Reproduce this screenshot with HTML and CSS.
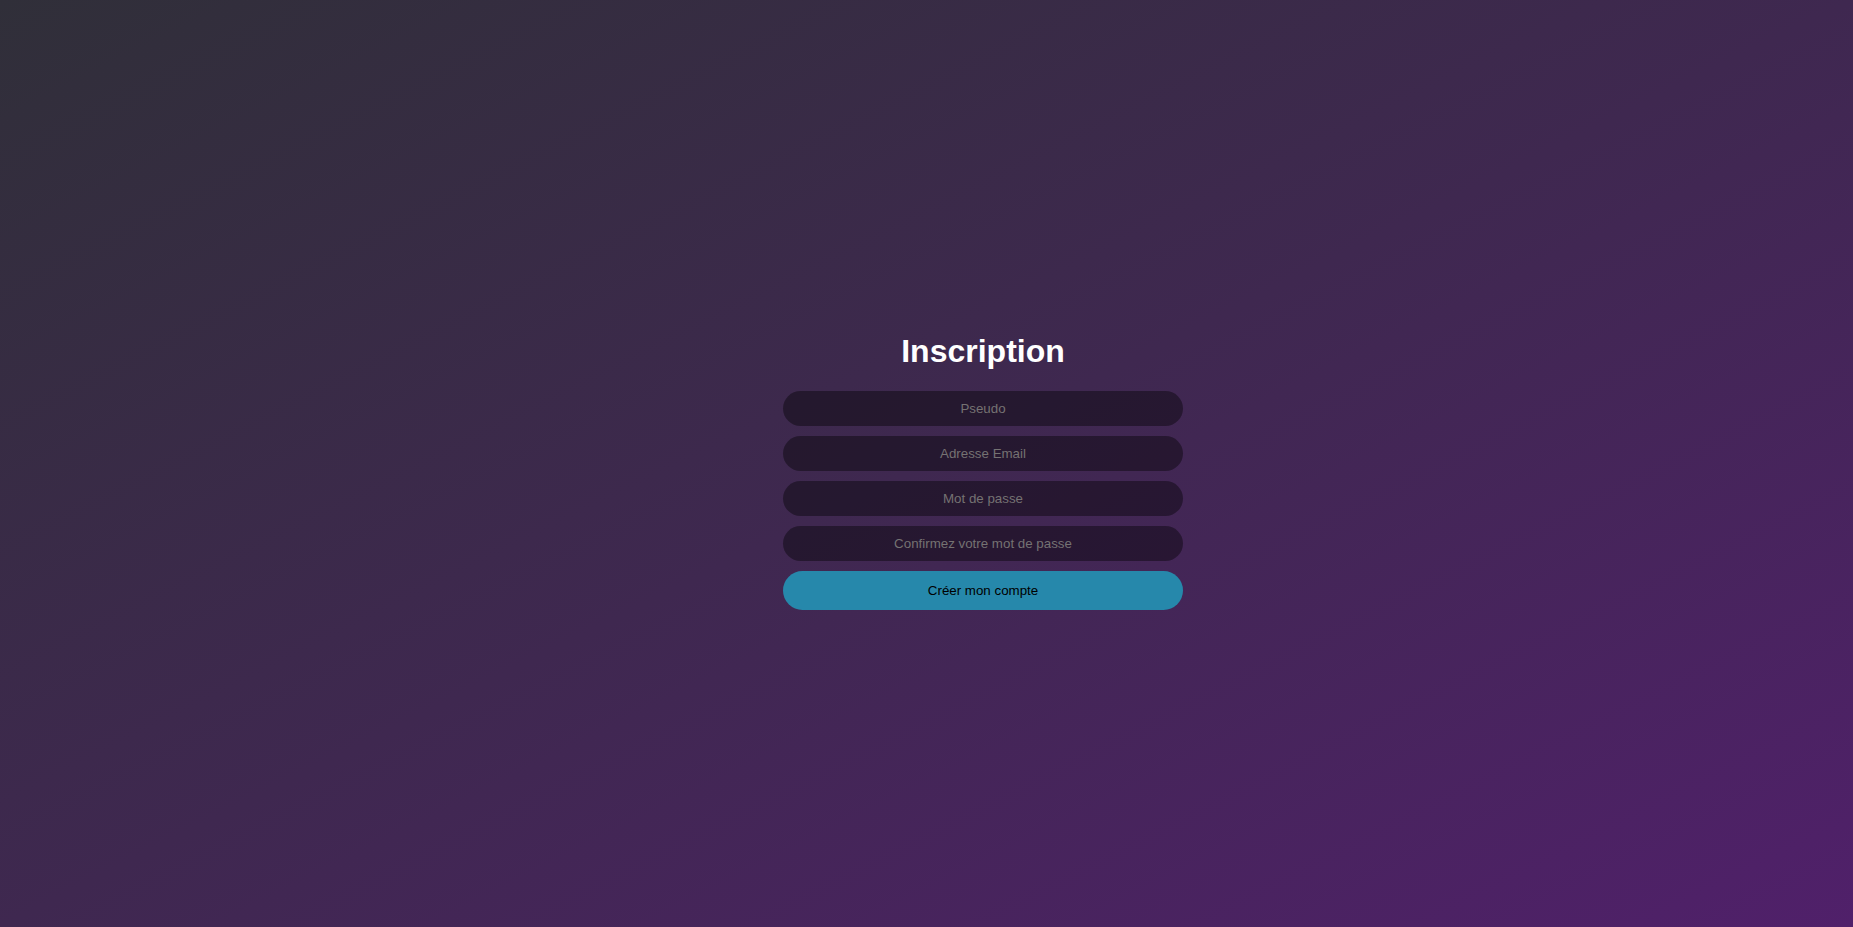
FILE: index.html
```html
<!DOCTYPE html>
<html lang="fr">
<head>
<meta charset="utf-8">
<title>Inscription</title>
<link rel="stylesheet" href="styles.css">
</head>
<body>
<main class="page">
  <form class="signup">
    <h1 class="signup-title">Inscription</h1>
    <input class="field" type="text" placeholder="Pseudo">
    <input class="field" type="email" placeholder="Adresse Email">
    <input class="field" type="password" placeholder="Mot de passe">
    <input class="field" type="password" placeholder="Confirmez votre mot de passe">
    <button class="submit" type="button">Créer mon compte</button>
  </form>
</main>
</body>
</html>
```
FILE: styles.css
```css
html, body {
  margin: 0;
  height: 100%;
}
body {
  background: linear-gradient(to bottom right, #302f39, #3f2850 50%, #50206a);
  font-family: "Liberation Sans", Arial, sans-serif;
}
.page {
  min-height: 100vh;
  box-sizing: border-box;
  display: flex;
  justify-content: center;
  align-items: flex-start;
  padding-top: 333px;
  padding-left: 113px;
}
.signup {
  width: 400px;
  display: flex;
  flex-direction: column;
  gap: 10px;
}
.signup-title {
  margin: 0 0 11px;
  font-size: 32px;
  font-weight: bold;
  color: #ffffff;
  text-align: center;
  line-height: 37px;
}
.field {
  box-sizing: border-box;
  height: 35px;
  width: 100%;
  border: none;
  border-radius: 18px;
  background: rgba(0, 0, 0, 0.4);
  color: #ddd;
  font-family: "Liberation Sans", Arial, sans-serif;
  font-size: 13.33px;
  text-align: center;
  outline: none;
  padding: 0 16px;
}
.field::placeholder {
  color: #757272;
}
.submit {
  box-sizing: border-box;
  height: 39px;
  width: 100%;
  border: none;
  border-radius: 20px;
  background: #2688ab;
  color: #000;
  font-family: "Liberation Sans", Arial, sans-serif;
  font-size: 13.33px;
  cursor: pointer;
}
```
